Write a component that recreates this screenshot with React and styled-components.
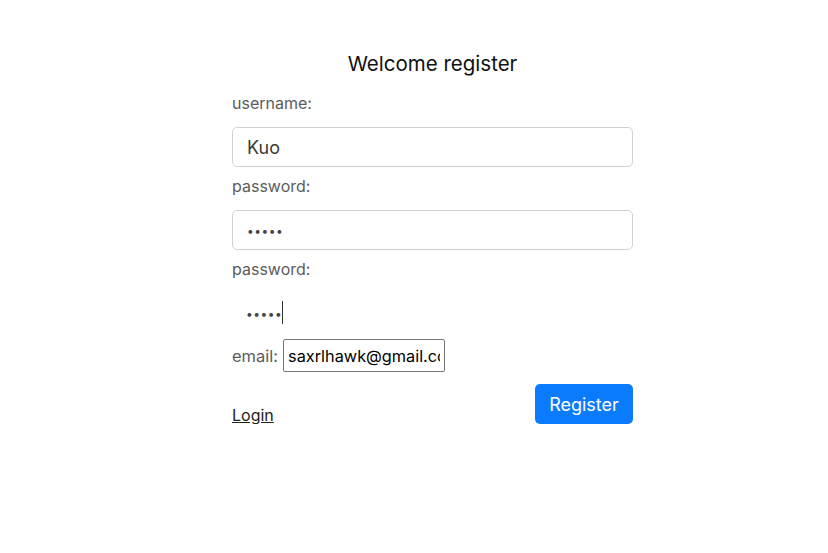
import styled, { createGlobalStyle } from "styled-components"

const GlobalStyle = createGlobalStyle`
  body {
    margin: 0;
    background: #fff;
    font-family: "Inter", "Noto Sans", sans-serif;
  }
`

const Page = styled.div`
  padding-top: 51px;
  padding-left: 232px;
`

// 表單容器
const Form = styled.form`
  width: 401px;
  display: flex;
  flex-direction: column;
`

const Title = styled.h1`
  margin: 0 0 14px;
  font-size: 20.5px;
  font-weight: 400;
  line-height: 26px;
  color: #111;
  text-align: center;
`

const Label = styled.label`
  font-size: 16px;
  line-height: 24px;
  color: #5c5c5c;
  margin-bottom: 12px;
`

const TextInput = styled.input`
  box-sizing: border-box;
  height: 40px;
  width: 100%;
  margin: 0 0 7px;
  padding: 0 14px;
  font-family: inherit;
  font-size: 18px;
  color: #3a3a3a;
  background: #fff;
  border: ${props => props.$bare ? "none" : "1px solid #d0d3d6"};
  border-radius: 5px;
  outline: none;
  caret-color: #222;

  &[type="password"] {
    font-size: 12px;
    letter-spacing: 0.5px;
    color: #444;
  }
`

// 密碼欄位 + 游標
const CaretField = styled.div`
  position: relative;
  margin-bottom: 6px;

  ${TextInput} {
    margin: 0;
  }
`

const Caret = styled.span`
  position: absolute;
  left: 50px;
  top: 8px;
  width: 1px;
  height: 23px;
  background: #333;
  pointer-events: none;
`

const EmailRow = styled.div`
  display: flex;
  align-items: center;
  gap: 5px;
  margin-bottom: 12px;
`

const EmailLabel = styled.label`
  font-size: 16.5px;
  color: #5c5c5c;
`

const EmailInput = styled.input`
  box-sizing: border-box;
  width: 162px;
  height: 33px;
  padding: 0 4px;
  font-family: inherit;
  font-size: 16.3px;
  color: #000;
  border: 1px solid #767676;
  border-radius: 2px;
  outline: none;
`

// 底部
const BottomRow = styled.div`
  display: flex;
  justify-content: space-between;
  align-items: flex-end;
`

const LoginLink = styled.a`
  font-size: 16px;
  line-height: 18px;
  color: #222;
  text-decoration: underline;
  cursor: pointer;
`

const RegisterButton = styled.button`
  width: 98px;
  height: 40px;
  border: none;
  border-radius: 5px;
  background: #0b7bfd;
  color: #fff;
  font-family: inherit;
  font-size: 18px;
  cursor: pointer;
`

const App = () => {
  return (
    <Page>
      <GlobalStyle />
      <Form onSubmit={e => e.preventDefault()}>
        <Title>Welcome register</Title>
        <Label>username:</Label>
        <TextInput type="text" defaultValue="Kuo" />
        <Label>password:</Label>
        <TextInput type="password" defaultValue="12345" />
        <Label>password:</Label>
        <CaretField>
          <TextInput type="password" defaultValue="12345" $bare />
          <Caret />
        </CaretField>
        <EmailRow>
          <EmailLabel>email:</EmailLabel>
          <EmailInput type="text" defaultValue="saxrlhawk@gmail.com" />
        </EmailRow>
        <BottomRow>
          <LoginLink>Login</LoginLink>
          <RegisterButton type="submit">Register</RegisterButton>
        </BottomRow>
      </Form>
    </Page>
  )
}

export default App
